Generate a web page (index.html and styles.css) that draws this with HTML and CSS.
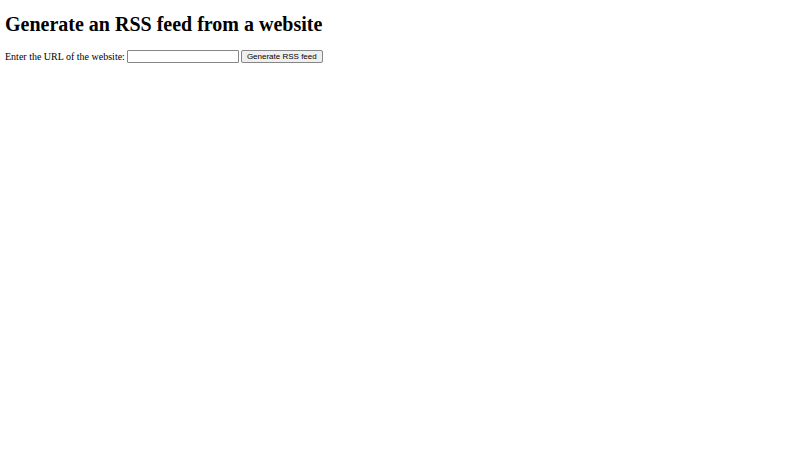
FILE: index.html
```html
<!DOCTYPE html>
<html lang="en">
<head>
<meta charset="utf-8">
<title>Generate an RSS feed from a website</title>
<link rel="stylesheet" href="styles.css">
</head>
<body>
<h1 class="title">Generate an RSS feed from a website</h1>
<form class="feed-form">
<label class="label" for="url">Enter the URL of the website:</label>
<input class="url" type="text" id="url" name="url">
<button class="submit" type="submit">Generate RSS feed</button>
</form>
</body>
</html>
```
FILE: styles.css
```css
body {
  margin: 12px 5px;
  background: #fff;
  color: #000;
  font-family: "Liberation Serif", "Times New Roman", serif;
  font-size: 10px;
}

.title {
  margin: 0 0 13px;
  font-size: 20px;
  line-height: 25px;
}

.feed-form {
  display: flex;
  flex-wrap: wrap;
  align-items: center;
  gap: 2px;
}

.label {
  line-height: 13px;
}

.url,
.submit {
  box-sizing: border-box;
  height: 13px;
  margin: 0;
  border: 1px solid #858585;
  border-radius: 1px;
  font-family: "Liberation Sans", Arial, sans-serif;
  font-size: 8px;
  line-height: 11px;
}

.url {
  width: 112px;
  padding: 0 1px;
  background: #fff;
}

.submit {
  padding: 0 5px;
  border-radius: 2px;
  background: #efefef;
  color: #000;
}
```
